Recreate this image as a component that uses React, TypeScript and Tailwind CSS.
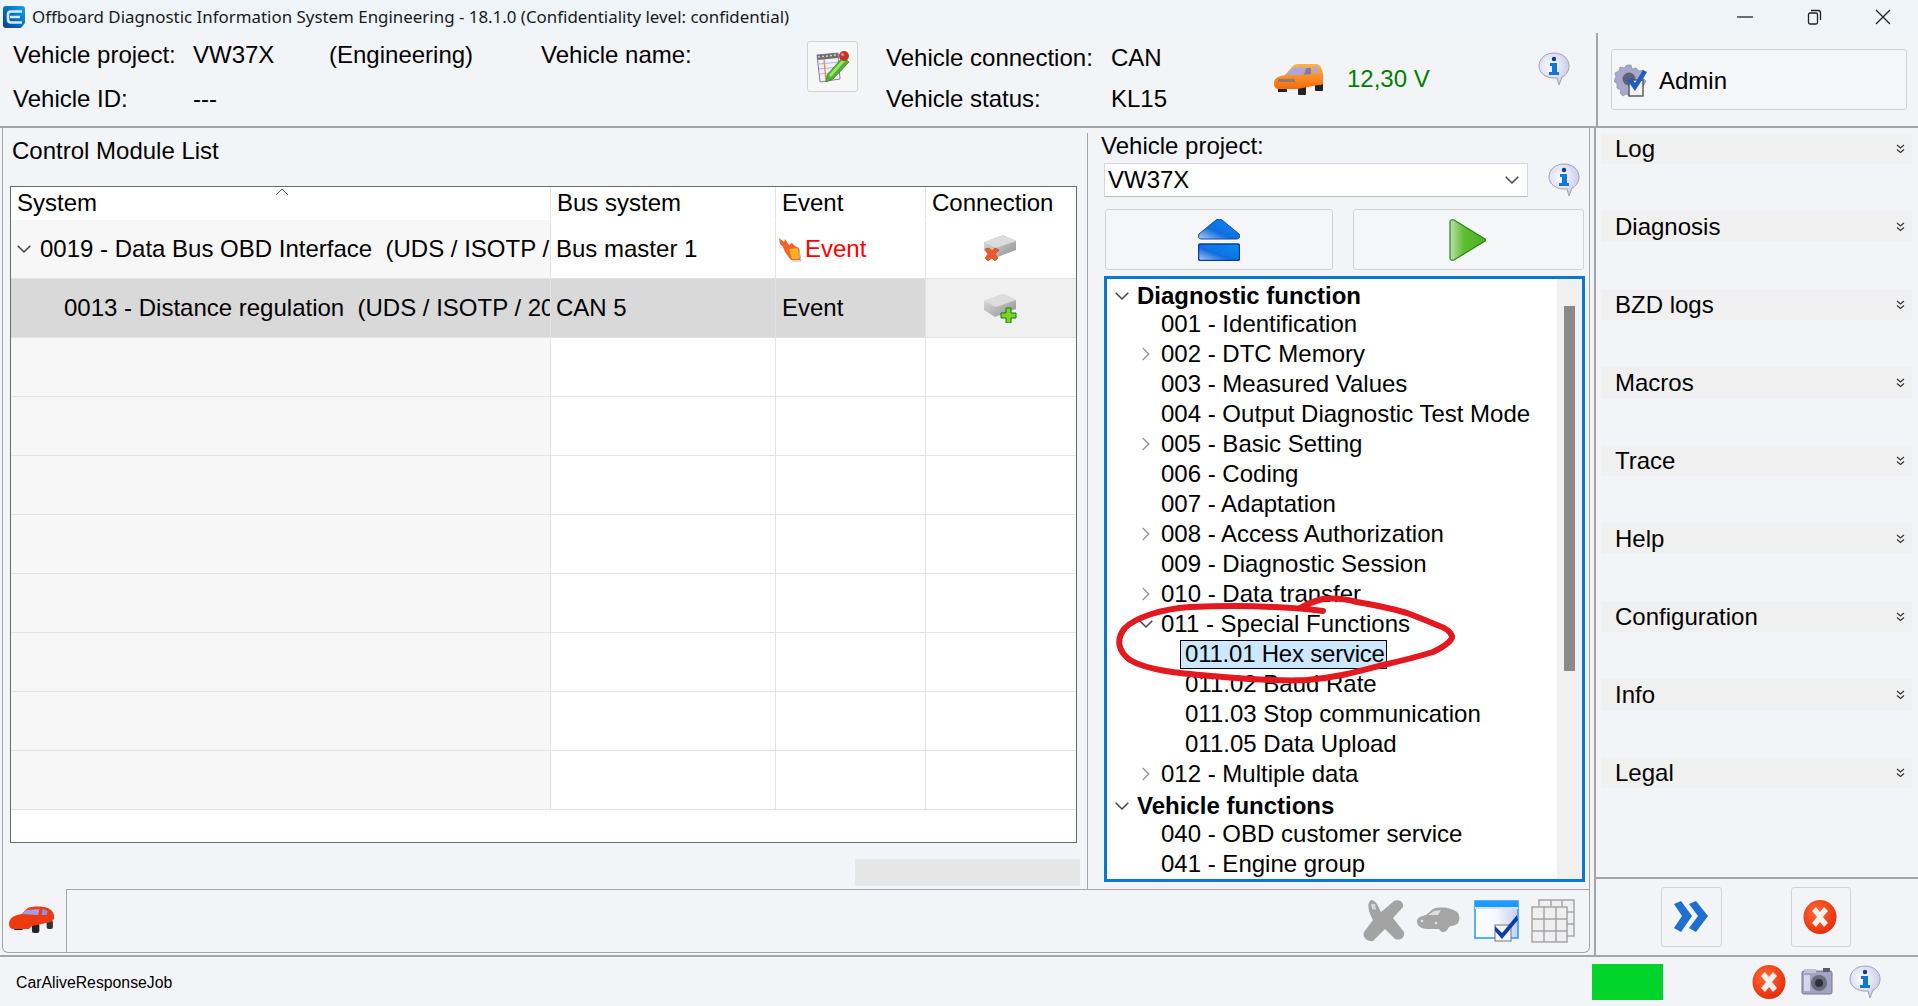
import React from "react";

const Chev = ({ open, dark }: { open?: boolean; dark?: boolean }) => (
  <svg width="14" height="14" viewBox="0 0 14 14" fill="none" stroke={open || dark ? "#444444" : "#999999"} strokeWidth="1.5">
    {open ? <path d="M.7 3.7 7 10 13.3 3.7" /> : <path d="M3.7 1 9.7 7 3.7 13" />}
  </svg>
);

const Logo = () => (
  <svg width="22" height="22" viewBox="0 0 22 22">
    <defs>
      <linearGradient id="lg" x1="0" y1="1" x2="1" y2="0">
        <stop offset="0" stopColor="#0a3f94" />
        <stop offset=".55" stopColor="#0a73c8" />
        <stop offset="1" stopColor="#12a6e6" />
      </linearGradient>
    </defs>
    <path d="M3 0 H19 Q22 0 22 3 V17 L18 22 H3 Q0 22 0 19 V3 Q0 0 3 0Z" fill="url(#lg)" />
    <path d="M19 5.5 H8 Q5 5.5 5 8.5 V13.5 Q5 16.5 8 16.5 H19 M7 11 H17" fill="none" stroke="#cfeefc" strokeWidth="2.6" />
  </svg>
);

const NoteIcon = () => (
  <svg width="34" height="34" viewBox="0 0 34 34">
    <path d="M1 5 L22 3 L24 29 L4 32Z" fill="#f2f1fa" stroke="#7e7eb0" />
    <path d="M1 5 L22 3 L22.5 8 L1.5 10Z" fill="#6f6f6f" />
    <path d="M2 7 L21 5" stroke="#d0d0d0" strokeWidth="1.5" strokeDasharray="2 2" />
    <path d="M3 14 L23 12 M3 19 L23 17 M4 24 L23 22" stroke="#a9b6e6" />
    <path d="M8 9 L10 31" stroke="#e8935c" strokeWidth="1.5" />
    <path d="M11 25 L27 7 L33 12 L17 29 L10 32Z" fill="#4db52a" stroke="#2c7d1a" strokeWidth=".7" />
    <path d="M13 25 L27 9 L29 11 L15 27Z" fill="#a5e06d" />
    <circle cx="28" cy="6" r="5" fill="#c9322a" />
    <circle cx="26.5" cy="4.5" r="1.6" fill="#ee8a7e" />
  </svg>
);

const InfoBubble = ({ s = 34 }: { s?: number }) => (
  <svg width={s} height={s} viewBox="0 0 34 34">
    <defs>
      <radialGradient id="bub" cx="40%" cy="40%" r="70%">
        <stop offset="0" stopColor="#ffffff" />
        <stop offset="1" stopColor="#c3c4ea" />
      </radialGradient>
    </defs>
    <path d="M17 1 C26 1 32 7 32 14 C32 20 28 24 25 25 L22 33 L20 26 C9 27 2 21 2 14 C2 7 8 1 17 1Z" fill="url(#bub)" stroke="#a2a2b5" />
    <circle cx="17" cy="7" r="2.2" fill="#0b3d9c" />
    <path d="M13 11 H20 V20 H22 V23 H12 V20 H15 V14 H13Z" fill="#0f78dc" />
  </svg>
);

const OrangeCar = () => (
  <svg width="52" height="34" viewBox="0 0 52 34">
    <defs>
      <linearGradient id="oc" x1="0" y1="0" x2="0" y2="1">
        <stop offset="0" stopColor="#ffb347" />
        <stop offset="1" stopColor="#f66a08" />
      </linearGradient>
    </defs>
    <rect x="5" y="25" width="9" height="5" fill="#222" />
    <rect x="42" y="21" width="8" height="8" rx="1" fill="#222" />
    <rect x="25" y="24" width="8" height="9" rx="1" fill="#222" />
    <path d="M1 21 C1 16 6 14 12 13 L20 4 C22 2 24 2 28 2 L43 2 C47 2 49 6 50 12 L50 21 C50 23 47 23 45 23 L35 25 L24 27 L6 27 C3 27 1 25 1 21Z" fill="url(#oc)" />
    <path d="M13 13 L20 6 L33 5 L29 13Z" fill="#a9a7e3" />
    <path d="M33 6 H38 V12 L31 13Z" fill="#7b79bd" />
    <path d="M40 5 H44 L46 11 H40Z" fill="#a9a7e3" />
    <rect x="5" y="17" width="17" height="3" fill="#8d7b70" />
  </svg>
);

const RedCar = () => (
  <svg width="46" height="27" viewBox="0 0 44 27" preserveAspectRatio="none">
    <rect x="5" y="21" width="8" height="3" fill="#222" />
    <rect x="36" y="14" width="6" height="9" rx="2" fill="#333" />
    <rect x="22" y="17" width="7" height="10" rx="2" fill="#222" />
    <path d="M0 17 C1 11 6 9 12 8 L18 2 C22 0 32 0 37 2 C41 4 44 7 43 13 L40 16 L22 20 L19 23 L4 23 C1 23 0 20 0 17Z" fill="#ee3a0f" />
    <path d="M12 8 L17 4 L29 3 L28 9 Z" fill="#9f9fe8" />
    <path d="M32 3 L37 5 L36 9 L31 9Z" fill="#8f8fe0" />
  </svg>
);

const GrayCar = () => (
  <svg width="44" height="27" viewBox="0 0 44 27">
    <path d="M1 13 C3 9 7 9 10 8 L17 2 C24 -1 36 1 41 5 C44 8 44 13 42 16 C40 19 36 18 33 20 C30 26 26 27 23 22 L11 22 C6 22 0 19 1 13Z" fill="#a5a5a5" />
    <path d="M12 8 L18 4 L25 3 L22 8Z" fill="#dedede" />
    <circle cx="6" cy="14" r="1.3" fill="#e3e3e3" />
    <circle cx="20" cy="16" r="1.3" fill="#e3e3e3" />
  </svg>
);

const Flame = () => (
  <svg width="24" height="26" viewBox="0 0 24 26">
    <path d="M1 2 L6 6 L7 3 L11 9 L14 7 L17 10 L21 12 L22 24 L13 24 L7 16 L5 11 L2 8Z" fill="#f0622a" />
    <path d="M11 13 L20 12 L21 23 L14 23Z" fill="#ffb21f" />
    <path d="M21 13 L23 25 L14 25" fill="none" stroke="#b5b5b5" />
  </svg>
);

const Disk = ({ kind }: { kind: "x" | "plus" }) => (
  <svg width="34" height="30" viewBox="0 0 34 30">
    <defs>
      <linearGradient id="dk" x1="0" y1="0" x2="1" y2="1">
        <stop offset="0" stopColor="#e2e2e2" />
        <stop offset="1" stopColor="#8f8f8f" />
      </linearGradient>
    </defs>
    <path d="M1 8 L20 1 L33 7 L33 16 L12 24 L1 17Z" fill="url(#dk)" />
    <path d="M1 8 L13 14 L33 7 L20 1Z" fill="#dcdcdc" />
    {kind === "x" ? (
      <path d="M2 15 L6 14 L9 17 L12 14 L16 16 L12 20 L15 24 L12 27 L9 24 L5 27 L2 24 L5 20Z" fill="#ec5a2b" stroke="#c23a18" strokeWidth=".6" />
    ) : (
      <path d="M23 15 H28 V20 H33 V25 H28 V30 H23 V25 H18 V20 H23Z" fill="#7ed321" stroke="#0f7d12" />
    )}
  </svg>
);

const GearAdmin = () => (
  <svg width="35" height="34" viewBox="0 0 35 34">
    <path d="M13 1 L17 1 L18 5 L22 4 L25 7 L29 6 L31 10 L29 14 L32 17 L30 21 L24 28 L16 32 L12 30 L9 32 L6 29 L7 26 L3 24 L3 20 L0 17 L2 13 L1 9 L5 7 L6 3 L10 4Z" fill="#a5a9cc" stroke="#8a8aa5" strokeWidth=".7" />
    <circle cx="15" cy="15" r="6.5" fill="#5f6278" />
    <rect x="15" y="16" width="14" height="16" fill="#f2f2f8" stroke="#555" strokeWidth="1.4" />
    <path d="M13 16 L21 27 L33 8 L29 6 L21 19 L18 14Z" fill="#1c5fc0" />
  </svg>
);

const Eject = () => (
  <svg width="42" height="42" viewBox="0 0 42 42">
    <defs>
      <linearGradient id="ej" x1="0" y1="1" x2="1" y2="0">
        <stop offset="0" stopColor="#b9cdf0" />
        <stop offset=".4" stopColor="#0f6fdc" />
        <stop offset="1" stopColor="#0a8cf5" />
      </linearGradient>
    </defs>
    <path d="M18 1 Q21 -1 24 1 L41 15 Q43 19 39 20 H3 Q-1 19 1 15Z" fill="url(#ej)" stroke="#1148b0" strokeWidth="1" />
    <rect x=".5" y="25" width="41" height="16.5" rx="2" fill="url(#ej)" stroke="#0a3aa8" strokeWidth="1.4" />
  </svg>
);

const PlayGreen = () => (
  <svg width="37" height="42" viewBox="0 0 37 42">
    <defs>
      <linearGradient id="pl" x1="0" y1="0" x2="1" y2="0">
        <stop offset="0" stopColor="#c0dcb0" />
        <stop offset=".4" stopColor="#5cbe30" />
        <stop offset="1" stopColor="#4cae26" />
      </linearGradient>
    </defs>
    <path d="M1 3 Q1 0 5 1 L36 20 Q37 21 36 22 L5 41 Q1 42 1 39Z" fill="url(#pl)" stroke="#1f8a1a" strokeWidth="1.2" />
  </svg>
);

const DoubleChev = () => (
  <svg width="36" height="32" viewBox="0 0 36 32">
    <path d="M1 3 L8 0 L19 15 L8 31 L1 27 L9 15Z" fill="#1f6fd0" />
    <path d="M16 3 L23 0 L35 15 L23 31 L16 27 L25 15Z" fill="#1f6fd0" />
  </svg>
);

const RedX = () => (
  <svg width="34" height="36" viewBox="0 0 34 36">
    <defs>
      <radialGradient id="rx" cx="40%" cy="35%" r="70%">
        <stop offset="0" stopColor="#ff6a3a" />
        <stop offset="1" stopColor="#e52a04" />
      </radialGradient>
    </defs>
    <ellipse cx="17" cy="18" rx="16.5" ry="17" fill="url(#rx)" />
    <path d="M9 12 L13 8 L17 13 L21 8 L25 12 L20 18 L25 24 L21 28 L17 23 L13 28 L9 24 L14 18Z" fill="#f5f0ee" />
  </svg>
);

const Camera = () => (
  <svg width="32" height="30" viewBox="0 0 32 30">
    <rect x="1" y="4" width="30" height="23" rx="2" fill="#a3a3c4" stroke="#77778f" />
    <rect x="3" y="2" width="12" height="4" fill="#c3c3d8" />
    <rect x="22" y="1" width="7" height="4" fill="#5a5a6c" />
    <circle cx="18" cy="16" r="8" fill="#6b6b7d" />
    <circle cx="18" cy="16" r="4" fill="#30303a" />
    <rect x="3" y="8" width="6" height="16" fill="#d6d6e6" />
  </svg>
);

const GrayX = () => (
  <svg width="42" height="42" viewBox="0 0 42 42">
    <path d="M8 0 C13 0 15 6 18 12 L31 1 C36 -1 41 2 40 7 L30 18 L41 32 C42 38 37 41 32 39 L22 29 L10 41 C4 42 -1 37 1 32 L10 20 C6 14 3 3 8 0Z" fill="#a3a3a3" />
    <path d="M8 4 L12 4 L13 10 L9 9Z" fill="#d8d8d8" />
  </svg>
);

const WindowCheck = () => (
  <svg width="46" height="42" viewBox="0 0 46 42">
    <defs>
      <linearGradient id="wc" x1="0" y1="0" x2="1" y2="0">
        <stop offset="0" stopColor="#ffffff" />
        <stop offset=".5" stopColor="#f6f6fe" />
        <stop offset="1" stopColor="#c9cdf5" />
      </linearGradient>
    </defs>
    <rect x="1" y="1" width="43" height="37" fill="url(#wc)" stroke="#1e9bff" strokeWidth="1.5" />
    <rect x="1" y="1" width="43" height="6" fill="#1e9bff" />
    <rect x="1" y="7" width="43" height="2" fill="#cfe4fb" />
    <rect x="21" y="25" width="16" height="16" fill="#f5f5f5" stroke="#777" />
    <path d="M21 26 L28 33 L43 15 L44 20 L28 39 L21 31Z" fill="#0e3fa8" />
  </svg>
);

const GridIcon = () => (
  <svg width="44" height="44" viewBox="0 0 44 44" fill="#efefef" stroke="#a5a5a5" strokeWidth="1.5">
    <path d="M8 7 V1 H43 V37 H36" />
    <path d="M20 1 V7 M31 1 V7 M36 13 H43 M36 25 H43" />
    <rect x="1" y="8" width="35" height="35" />
    <path d="M1 20 H36 M1 32 H36 M13 8 V43 M25 8 V43" />
  </svg>
);

const Dbl = () => (
  <svg width="9" height="10" viewBox="0 0 9 10" fill="none" stroke="#333" strokeWidth="1.2">
    <path d="M1 1 L4.5 4 L8 1 M1 5.5 L4.5 8.5 L8 5.5" />
  </svg>
);

type Node = { t: string; lvl: 0 | 1 | 2; c?: "open" | "closed"; sel?: boolean };
const tree: Node[] = [
  { t: "Diagnostic function", lvl: 0, c: "open" },
  { t: "001 - Identification", lvl: 1 },
  { t: "002 - DTC Memory", lvl: 1, c: "closed" },
  { t: "003 - Measured Values", lvl: 1 },
  { t: "004 - Output Diagnostic Test Mode", lvl: 1 },
  { t: "005 - Basic Setting", lvl: 1, c: "closed" },
  { t: "006 - Coding", lvl: 1 },
  { t: "007 - Adaptation", lvl: 1 },
  { t: "008 - Access Authorization", lvl: 1, c: "closed" },
  { t: "009 - Diagnostic Session", lvl: 1 },
  { t: "010 - Data transfer", lvl: 1, c: "closed" },
  { t: "011 - Special Functions", lvl: 1, c: "open" },
  { t: "011.01 Hex service", lvl: 2, sel: true },
  { t: "011.02 Baud Rate", lvl: 2 },
  { t: "011.03 Stop communication", lvl: 2 },
  { t: "011.05 Data Upload", lvl: 2 },
  { t: "012 - Multiple data", lvl: 1, c: "closed" },
  { t: "Vehicle functions", lvl: 0, c: "open" },
  { t: "040 - OBD customer service", lvl: 1 },
  { t: "041 - Engine group", lvl: 1 },
];

const TreeRow = ({ n }: { n: Node }) => {
  if (n.lvl === 0)
    return (
      <div className="flex items-center h-[27px] mt-[3px] pl-[8px] font-bold">
        <span className="w-[22px] flex"><Chev open /></span>
        <span>{n.t}</span>
      </div>
    );
  if (n.lvl === 1)
    return (
      <div className="flex items-center h-[30px] pl-[32px]">
        <span className="w-[22px] flex">{n.c && <Chev open={n.c === "open"} />}</span>
        <span>{n.t}</span>
      </div>
    );
  return (
    <div className="flex items-center h-[30px] pl-[78px]">
      {n.sel ? (
        <span className="-ml-[5px] pl-[4px] w-[207px] h-[29px] flex items-center whitespace-pre bg-[#cce8ff] border border-black tracking-[-0.22px]">{n.t}</span>
      ) : (
        <span>{n.t}</span>
      )}
    </div>
  );
};

const tableRows = [0, 1, 2, 3, 4, 5, 6, 7, 8, 9];

const TableRow = ({ i }: { i: number }) => {
  const sel = i === 1;
  const cell = "h-full flex items-center border-r border-[#e3e3e3] overflow-hidden whitespace-pre shrink-0";
  return (
    <div className="flex h-[59px] shrink-0 border-b border-[#e3e3e3]">
      <div className={`${cell} w-[540px] ${sel ? "bg-[#d9d9d9]" : "bg-[#f7f7f7]"} ${i === 0 ? "pl-[6px]" : "pl-[53px]"}`}>
        {i === 0 && <span className="w-[23px] flex shrink-0"><Chev open /></span>}
        {i === 0 && "0019 - Data Bus OBD Interface  (UDS / ISOTP / 20000 / CAN"}
        {i === 1 && "0013 - Distance regulation  (UDS / ISOTP / 20000 / CAN"}
      </div>
      <div className={`${cell} w-[225px] pl-[5px] ${sel ? "bg-[#d9d9d9]" : "bg-white"}`}>
        {i === 0 && "Bus master 1"}
        {i === 1 && "CAN 5"}
      </div>
      <div className={`${cell} w-[150px] ${sel ? "bg-[#d9d9d9] pl-[6px]" : "bg-white"} ${i === 0 ? "pl-[2px] text-[#ff0000]" : ""}`}>
        {i === 0 && <span className="mr-[3px] flex"><Flame /></span>}
        {i < 2 && "Event"}
      </div>
      <div className={`h-full flex-1 flex items-center justify-center pr-[3px] ${sel ? "bg-[#f0f0f0]" : "bg-white"}`}>
        {i === 0 && <Disk kind="x" />}
        {i === 1 && <Disk kind="plus" />}
      </div>
    </div>
  );
};

const sections = ["Log", "Diagnosis", "BZD logs", "Macros", "Trace", "Help", "Configuration", "Info", "Legal"];

export default function App() {
  return (
    <div className="relative w-[1918px] h-[1006px] overflow-hidden bg-[#f3f4f7] text-black text-[24px] leading-[28px] font-['Liberation_Sans',Arial,sans-serif]">
      {/* title bar */}
      <div className="h-[33px] flex items-center bg-[#eff4f9]">
        <span className="ml-[3px] flex"><Logo /></span>
        <span className="ml-[7px] text-[16.9px] font-['Noto_Sans',sans-serif] text-[#1a1a1a]">
          Offboard Diagnostic Information System Engineering - 18.1.0 (Confidentiality level: confidential)
        </span>
        <div className="ml-auto flex items-center gap-[51px] pr-[26px]">
          <svg width="18" height="18" viewBox="0 0 18 18" stroke="#222" strokeWidth="1.3"><path d="M1 9 H17" /></svg>
          <svg width="18" height="18" viewBox="0 0 18 18" stroke="#222" strokeWidth="1.3" fill="none"><rect x="3.5" y="5" width="9" height="11" rx="1.5" /><path d="M6 2.5 H13 Q15.5 2.5 15.5 5 V12" /></svg>
          <svg width="18" height="18" viewBox="0 0 18 18" stroke="#222" strokeWidth="1.3"><path d="M2 2 L16 16 M16 2 L2 16" /></svg>
        </div>
      </div>

      {/* header */}
      <div className="h-[95px] flex border-b-2 border-[#a5a5a5]">
        <div className="w-[807px] shrink-0 pl-[13px] pt-[8px] flex flex-col gap-[16px]">
          <div className="flex h-[28px]">
            <span className="w-[180px]">Vehicle project:</span>
            <span className="w-[136px]">VW37X</span>
            <span className="w-[212px]">(Engineering)</span>
            <span>Vehicle name:</span>
          </div>
          <div className="flex h-[28px]">
            <span className="w-[180px]">Vehicle ID:</span>
            <span>---</span>
          </div>
        </div>
        <button className="mt-[8px] w-[51px] h-[51px] border border-[#d3d3d3] rounded-[3px] bg-[#f7f7f7] flex items-center justify-center">
          <NoteIcon />
        </button>
        <div className="ml-[28px] w-[387px] shrink-0 pt-[11px] flex flex-col gap-[13px]">
          <div className="flex h-[28px]"><span className="w-[225px]">Vehicle connection:</span><span>CAN</span></div>
          <div className="flex h-[28px]"><span className="w-[225px]">Vehicle status:</span><span>KL15</span></div>
        </div>
        <div className="flex items-start pt-[29px]"><OrangeCar /></div>
        <div className="ml-[22px] w-[190px] pt-[32px] text-[#008000]">12,30 V</div>
        <div className="pt-[19px]"><InfoBubble /></div>
        <div className="ml-[25px] flex-1 border-l-2 border-[#a5a5a5] pl-[13px] pr-[11px] pt-[16px]">
          <button className="w-full h-[61px] border border-[#d3d3d3] rounded-[3px] bg-[#f5f6f8] flex items-center pl-[2px] pt-[2px]">
            <GearAdmin />
            <span className="ml-[10px]">Admin</span>
          </button>
        </div>
      </div>

      {/* body */}
      <div className="h-[829px] flex">
        <div className="w-[1594px] shrink-0 flex flex-col pl-[2px] pr-[4px] border-b-2 border-[#a5a5a5]">
          <div className="h-[761px] flex border-l border-r border-[#a5a5a5]">
            {/* left module list */}
            <div className="w-[1084px] shrink-0 flex flex-col pl-[7px]">
              <div className="h-[58px] pt-[9px] pl-[2px]">Control Module List</div>
              <div className="w-[1067px] h-[657px] border border-[#6b6b6b] bg-white flex flex-col overflow-hidden relative">
                <div className="h-[33px] shrink-0 flex items-center -translate-y-[1px]">
                  <span className="w-[540px] pl-[6px] border-r border-[#e3e3e3] h-full flex items-center">System</span>
                  <span className="w-[225px] pl-[6px] border-r border-[#e3e3e3] h-full flex items-center">Bus system</span>
                  <span className="w-[150px] pl-[6px] border-r border-[#e3e3e3] h-full flex items-center">Event</span>
                  <span className="pl-[6px] h-full flex items-center">Connection</span>
                </div>
                <svg className="absolute left-[264px] top-[1px]" width="14" height="8" viewBox="0 0 14 8" fill="none" stroke="#555"><path d="M1 7 L7 1 L13 7" /></svg>
                {tableRows.map((i) => <TableRow key={i} i={i} />)}
              </div>
              <div className="mt-[16px] ml-[845px] w-[225px] h-[27px] bg-[#e6e6e6]" />
            </div>
            {/* right diagnostics */}
            <div className="flex-1 border-l border-[#a5a5a5] mt-[5px] pl-[13px]">
              <div className="h-[25px] leading-[26px]">Vehicle project:</div>
              <div className="flex items-start h-[46px] mt-[5px] ml-[3px]">
                <div className="w-[424px] h-[34px] border border-[#d8d8d8] border-b-[#bbbbbb] bg-white flex items-center pl-[3px]">
                  VW37X
                  <span className="ml-auto mr-[8px] flex"><Chev open dark /></span>
                </div>
                <span className="ml-[19px] flex"><InfoBubble s={34} /></span>
              </div>
              <div className="flex gap-[20px] ml-[4px]">
                <button className="w-[228px] h-[61px] border border-[#d3d3d3] rounded-[3px] bg-[#f5f6f8] flex items-center justify-center"><Eject /></button>
                <button className="w-[231px] h-[61px] border border-[#d3d3d3] rounded-[3px] bg-[#f5f6f8] flex items-center justify-center pr-[2px]"><PlayGreen /></button>
              </div>
              <div className="mt-[6px] ml-[3px] w-[481px] h-[606px] border-[3px] border-[#0a78d2] bg-white flex overflow-hidden">
                <div className="w-[450px] shrink-0 overflow-hidden h-full">
                  {tree.map((n) => <TreeRow key={n.t} n={n} />)}
                </div>
                <div className="flex-1 bg-[#f0f0f0] pl-[7px] pt-[27px]">
                  <div className="w-[11px] h-[365px] bg-[#8a8a8a]" />
                </div>
              </div>
            </div>
          </div>
          {/* bottom strip */}
          <div className="h-[66px] flex">
            <div className="w-[65px] h-[64px] shrink-0 border-l border-b border-r border-[#a5a5a5] rounded-bl-[6px] flex items-start pl-[6px] pt-[17px]">
              <RedCar />
            </div>
            <div className="flex-1 h-[64px] border-t border-b border-r border-[#a5a5a5] rounded-br-[6px] flex items-center justify-end gap-[11px] pr-[14px] pb-[1px]">
              <GrayX />
              <GrayCar />
              <span className="ml-[3px] flex"><WindowCheck /></span>
              <GridIcon />
            </div>
          </div>
        </div>
        {/* right sidebar */}
        <div className="flex-1 flex flex-col border-l-2 border-[#a5a5a5] border-b-2">
          <div className="flex-1 pl-[5px] pr-[6px] pt-[5px]">
            {sections.map((s) => (
              <div key={s} className="h-[78px]">
                <div className="h-[31px] bg-[#f0f0f0] flex items-center pl-[14px] pr-[7px]">
                  {s}
                  <span className="ml-auto flex"><Dbl /></span>
                </div>
              </div>
            ))}
          </div>
          <div className="h-[78px] border-t-2 border-[#a5a5a5] flex pl-[65px] pt-[8px] gap-[69px]">
            <button className="w-[61px] h-[60px] border border-[#d3d3d3] rounded-[3px] flex items-center justify-center pr-[2px]"><DoubleChev /></button>
            <button className="w-[60px] h-[60px] border border-[#d3d3d3] rounded-[3px] flex items-center justify-center pr-[2px]"><RedX /></button>
          </div>
        </div>
      </div>

      {/* status bar */}
      <div className="h-[49px] flex items-center">
        <span className="pl-[16px] w-[1592px] text-[15.8px] pt-[3px]">CarAliveResponseJob</span>
        <div className="w-[71px] h-[36px] bg-[#00d42b]" />
        <span className="ml-[89px] flex"><RedX /></span>
        <span className="ml-[15px] flex"><Camera /></span>
        <span className="ml-[15px] flex"><InfoBubble /></span>
      </div>

      {/* hand-drawn annotation over the tree */}
      <svg className="absolute left-0 top-0 pointer-events-none" width="1918" height="1006" viewBox="0 0 1918 1006" fill="none">
        <path
          d="M1323 611 C1290 607 1240 605 1190 607 C1160 609 1135 618 1125 628 C1115 640 1119 652 1130 660 C1150 672 1190 674 1223 677 C1260 680 1290 681 1307 680 C1340 677 1360 671 1383 665 C1405 660 1420 656 1433 652 C1445 646 1453 640 1452 636 C1450 630 1443 627 1437 625 C1425 620 1415 616 1407 613 C1390 608 1375 605 1357 602 C1345 599 1333 598 1323 599 C1315 601 1307 604 1300 608"
          stroke="#e3191f"
          strokeWidth="6"
          strokeLinecap="round"
          strokeLinejoin="round"
        />
      </svg>
    </div>
  );
}
